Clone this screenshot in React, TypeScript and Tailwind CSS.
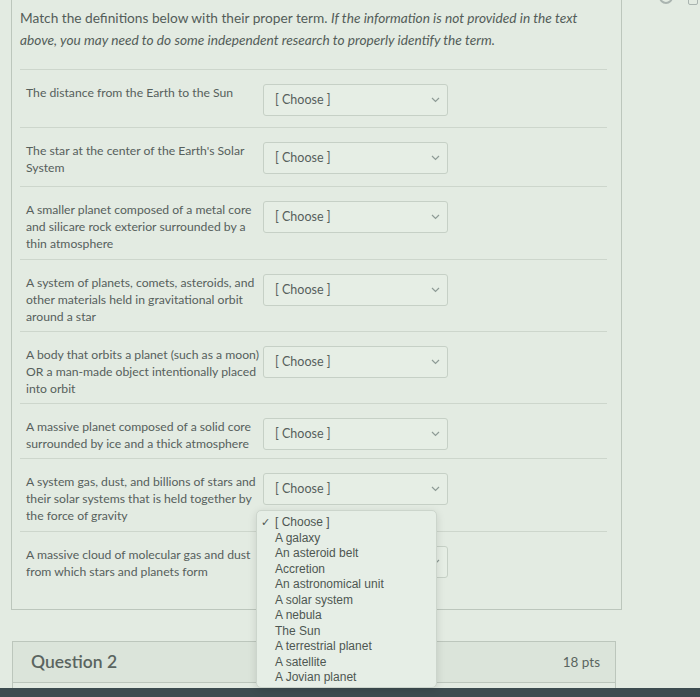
import React from 'react'

const rows: { lines: string[]; h: number }[] = [
  { lines: ['The distance from the Earth to the Sun'], h: 58 },
  { lines: ["The star at the center of the Earth's Solar", 'System'], h: 59 },
  {
    lines: [
      'A smaller planet composed of a metal core',
      'and silicare rock exterior surrounded by a',
      'thin atmosphere',
    ],
    h: 73,
  },
  {
    lines: [
      'A system of planets, comets, asteroids, and',
      'other materials held in gravitational orbit',
      'around a star',
    ],
    h: 72,
  },
  {
    lines: [
      'A body that orbits a planet (such as a moon)',
      'OR a man-made object intentionally placed',
      'into orbit',
    ],
    h: 72,
  },
  {
    lines: [
      'A massive planet composed of a solid core',
      'surrounded by ice and a thick atmosphere',
    ],
    h: 55,
  },
  {
    lines: [
      'A system gas, dust, and billions of stars and',
      'their solar systems that is held together by',
      'the force of gravity',
    ],
    h: 73,
  },
]

const options = [
  '[ Choose ]',
  'A galaxy',
  'An asteroid belt',
  'Accretion',
  'An astronomical unit',
  'A solar system',
  'A nebula',
  'The Sun',
  'A terrestrial planet',
  'A satellite',
  'A Jovian planet',
]

function Chevron() {
  return (
    <svg width="9" height="6" viewBox="0 0 9 6" fill="none">
      <path d="M1 1l3.5 3.5L8 1" stroke="#8e9b96" strokeWidth="1.2" />
    </svg>
  )
}

function SelectBox({ hidden }: { hidden?: boolean }) {
  return (
    <div className="flex h-[32px] w-[185px] shrink-0 items-center justify-between rounded-[3px] border border-[#c6d0c6] bg-[#e6eee5] pl-[11px] pr-[7px] text-[12.5px] text-[#56605c]">
      <span>{hidden ? '' : '[ Choose ]'}</span>
      <Chevron />
    </div>
  )
}

function Row({ lines, h, last }: { lines: string[]; h?: number; last?: boolean }) {
  return (
    <div
      className={`ml-[8px] mr-[14px] flex items-start pt-[14px] pl-[6px] ${last ? 'flex-1' : 'border-b border-[#cdd6cc]'}`}
      style={h ? { height: h } : undefined}
    >
      <div className="w-[237px] shrink-0 whitespace-nowrap text-[12.2px] leading-[17px] text-[#56605c]">
        {lines.map((l, i) => (
          <div key={i}>{l}</div>
        ))}
      </div>
      {/* the last select sits under the open menu, so its label is covered */}
      <SelectBox hidden={last} />
    </div>
  )
}

export default function App() {
  return (
    <div
      className="relative flex h-[697px] w-[700px] flex-col overflow-hidden bg-[#e3ebe2]"
      style={{ fontFamily: 'Lato, "Open Sans", sans-serif' }}
    >
      {/* bits of toolbar icons cut off at the top */}
      <div className="absolute left-[659px] top-[-10px] h-[14px] w-[14px] rounded-full border-2 border-[#aab4b0]" />
      <div className="absolute left-[688px] top-[-6px] h-[11px] w-[10px] rounded-[2px] border border-[#aab4b0]" />

      {/* Question 1 */}
      <div className="ml-[11px] flex h-[610px] w-[611px] shrink-0 flex-col border-x border-b border-[#bcc6bc]">
        <div className="pl-[8px] pt-[7px] text-[13.7px] leading-[22px] text-[#535d59]">
          Match the definitions below with their proper term.{' '}
          <i>If the information is not provided in the text</i>
          <br />
          <i>above, you may need to do some independent research to properly identify the term.</i>
        </div>
        <div className="ml-[8px] mr-[14px] mt-[18px] border-t border-[#cdd6cc]" />
        {rows.map((r, i) => (
          <Row key={i} lines={r.lines} h={r.h} />
        ))}
        <Row
          last
          lines={['A massive cloud of molecular gas and dust', 'from which stars and planets form']}
        />
      </div>

      {/* Question 2 */}
      <div className="ml-[12px] mt-[31px] flex w-[604px] flex-1 flex-col border-x border-[#bcc6bc]">
        <div className="flex h-[42px] items-center justify-between border-y border-[#bcc6bc] bg-[#dbe4da] pl-[18px] pr-[15px]">
          <span className="text-[17.5px] font-semibold text-[#5a6460]">Question 2</span>
          <span className="text-[13.5px] text-[#5a6460]">18 pts</span>
        </div>
      </div>
      <div className="h-[9px] shrink-0 bg-[#3d4c50]" />

      {/* open select menu */}
      <div
        className="absolute left-[256px] top-[510px] h-[178px] w-[181px] rounded-[5px] border border-[#ccd5cc] bg-[#e6eee6] pt-[4px] text-[12px] leading-[15.5px] text-[#4e5752] shadow-[0_2px_8px_rgba(0,0,0,0.12)]"
        style={{ fontFamily: '"Liberation Sans", Arial, sans-serif' }}
      >
        {options.map((o, i) => (
          <div key={o} className="relative pl-[18px]">
            {i === 0 && <span className="absolute left-[4px] top-0 text-[11px]">✓</span>}
            {o}
          </div>
        ))}
      </div>
    </div>
  )
}
